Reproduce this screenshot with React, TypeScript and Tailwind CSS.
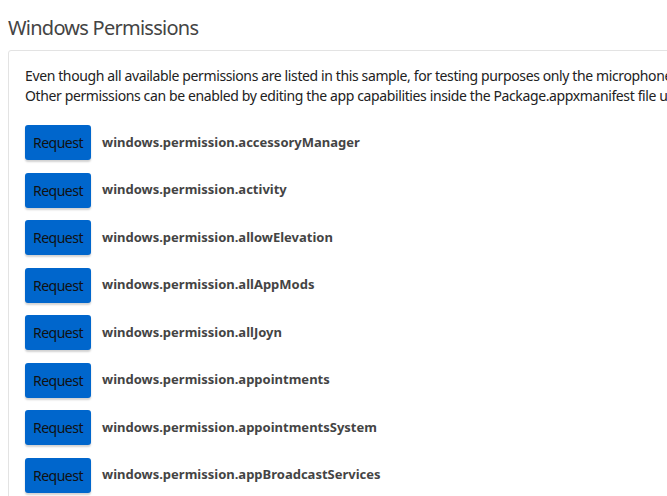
import React from "react";

const permissions = [
  "windows.permission.accessoryManager",
  "windows.permission.activity",
  "windows.permission.allowElevation",
  "windows.permission.allAppMods",
  "windows.permission.allJoyn",
  "windows.permission.appointments",
  "windows.permission.appointmentsSystem",
  "windows.permission.appBroadcastServices",
  "windows.permission.appCaptureServices",
];

export default function App() {
  return (
    <div
      className="h-[496px] w-[667px] overflow-hidden bg-white text-[#333]"
      style={{ fontFamily: '"Noto Sans", "Open Sans", sans-serif' }}
    >
      <div className="w-[1000px] pl-2 pt-[14px]">
        <h1 className="text-[20px] leading-[28px] tracking-[-0.75px] text-[#444]">Windows Permissions</h1>
        <div className="mt-[8px] rounded-[3px] border border-[#e3e3e3] px-4 pt-[15px]">
          <p className="text-[14px] leading-[20px] tracking-[-0.38px] text-[#222]">
            Even though all available permissions are listed in this sample, for testing purposes only the microphone permission is enabled.
            <br />
            Other permissions can be enabled by editing the app capabilities inside the Package.appxmanifest file under the Platforms/Windows folder.
          </p>
          <div className="mt-[19px] flex flex-col gap-[12.5px]">
            {permissions.map((p) => (
              <div key={p} className="flex items-center gap-[11px]">
                <button className="h-[35px] w-[66px] rounded-[3px] bg-[#0066cc] text-[14px] tracking-[-0.5px] text-[#111] shadow-[0_2px_2px_rgba(0,0,0,0.18)]">
                  Request
                </button>
                <span className="text-[13px] font-bold text-[#444]">{p}</span>
              </div>
            ))}
          </div>
        </div>
      </div>
    </div>
  );
}
